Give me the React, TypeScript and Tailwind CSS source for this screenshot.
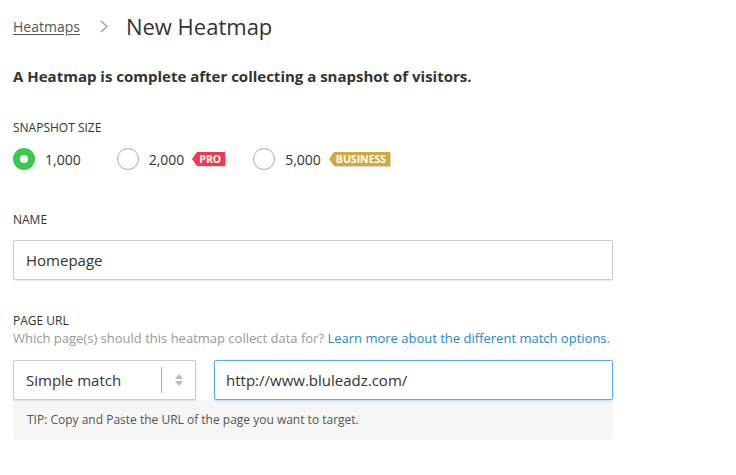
import React from "react";

function Radio({ checked }: { checked?: boolean }) {
  if (checked) {
    return (
      <span className="flex h-[22px] w-[22px] items-center justify-center rounded-full bg-[#3cc94a]">
        <span className="h-[8px] w-[8px] rounded-full bg-white" />
      </span>
    );
  }
  return <span className="h-[22px] w-[22px] rounded-full border border-[#aaa] bg-white" />;
}

function Tag({ label, color }: { label: string; color: string }) {
  return (
    <span className="ml-[8px] flex items-center">
      <span
        className="h-0 w-0 border-y-[7px] border-y-transparent border-r-[5px]"
        style={{ borderRightColor: color }}
      />
      <span
        className="flex h-[14px] items-center pr-[4px] pl-[2px] text-[10.5px] font-bold leading-none text-white shadow-[1px_1px_1px_rgba(0,0,0,0.15)]"
        style={{ backgroundColor: color }}
      >
        {label}
      </span>
    </span>
  );
}

export default function App() {
  return (
    <div
      className="min-h-[475px] w-[736px] bg-white px-[13px] text-[#333]"
      style={{ fontFamily: '"Open Sans", "Noto Sans", sans-serif' }}
    >
      <div className="flex items-center pt-[11px]">
        <a className="text-[14px] text-[#555] underline underline-offset-2">Heatmaps</a>
        <svg className="ml-[20px]" width="8" height="13" viewBox="0 0 8 13">
          <polyline points="1,1 7,6.5 1,12" fill="none" stroke="#999" strokeWidth="1.2" />
        </svg>
        <h1 className="ml-[18px] text-[22px] leading-[30px] text-[#333]">New Heatmap</h1>
      </div>

      <p className="mt-[25px] text-[15px] font-bold leading-[20px] text-[#333]">
        A Heatmap is complete after collecting a snapshot of visitors.
      </p>

      <div className="mt-[34px] text-[12px] leading-[16px] text-[#333]">SNAPSHOT SIZE</div>
      <div className="mt-[12px] flex items-center text-[14px]">
        <label className="flex items-center">
          <Radio checked />
          <span className="ml-[10px]">1,000</span>
        </label>
        <label className="ml-[36px] flex items-center">
          <Radio />
          <span className="ml-[10px]">2,000</span>
          <Tag label="PRO" color="#ef3a4e" />
        </label>
        <label className="ml-[28px] flex items-center">
          <Radio />
          <span className="ml-[10px]">5,000</span>
          <Tag label="BUSINESS" color="#d1aa3b" />
        </label>
      </div>

      <div className="mt-[42px] text-[12px] leading-[16px]">NAME</div>
      <div className="mt-[12px] flex h-[40px] w-[600px] items-center rounded-[2px] border border-[#ccc] bg-white px-[12px] text-[15px] shadow-[0_1px_2px_rgba(0,0,0,0.1)]">
        Homepage
      </div>

      <div className="mt-[33px] text-[12px] leading-[16px]">PAGE URL</div>
      <div className="text-[13px] leading-[18px] text-[#999]">
        Which page(s) should this heatmap collect data for?{" "}
        <a className="text-[#1a8ad4]">Learn more about the different match options.</a>
      </div>
      <div className="w-[600px]">
        <div className="mt-[13px] flex gap-[18px]">
          <div className="flex h-[40px] w-[183px] items-center rounded-[2px] border border-[#ccc] bg-white text-[15px] shadow-[0_1px_2px_rgba(0,0,0,0.1)]">
            <span className="flex-1 pl-[12px]">Simple match</span>
            <span className="h-[26px] w-px bg-[#aaa]" />
            <span className="flex w-[33px] flex-col items-center justify-center gap-[2px]">
              <span className="h-0 w-0 border-x-[4px] border-b-[5px] border-x-transparent border-b-[#bbb]" />
              <span className="h-0 w-0 border-x-[4px] border-t-[5px] border-x-transparent border-t-[#bbb]" />
            </span>
          </div>
          <div className="flex h-[40px] flex-1 items-center rounded-[2px] border border-[#5aaef0] bg-white px-[11px] text-[15px] shadow-[0_1px_3px_rgba(90,174,240,0.4)]">
            http://www.bluleadz.com/
          </div>
        </div>
        <div className="flex h-[40px] items-center rounded-b-[3px] bg-[#f6f6f6] px-[14px] text-[12px] text-[#555]">
          TIP: Copy and Paste the URL of the page you want to target.
        </div>
      </div>
    </div>
  );
}
